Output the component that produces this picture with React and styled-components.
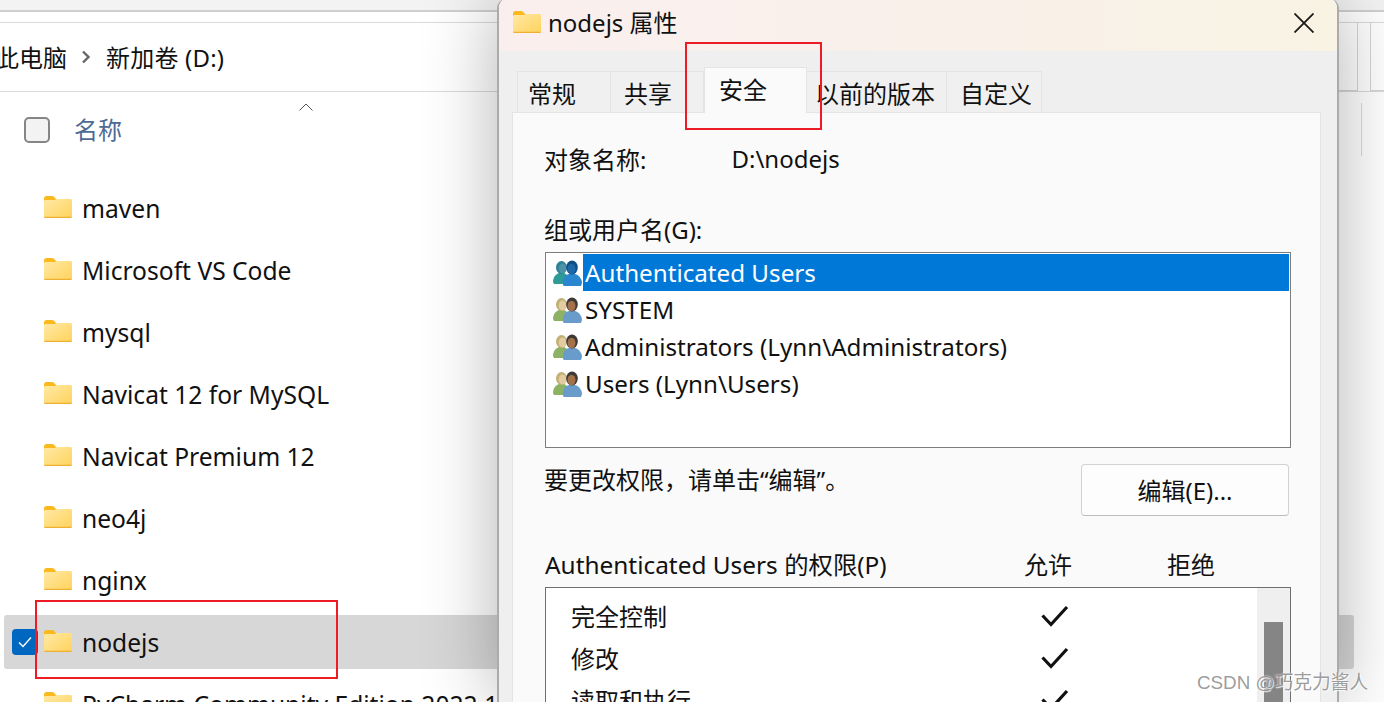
import React from 'react';
import styled, { createGlobalStyle } from 'styled-components';

const FONT = `"Noto Sans", "Noto Sans CJK SC", sans-serif`;

const GlobalStyle = createGlobalStyle`
    html, body {
        margin: 0;
        padding: 0;
        background: #fff;
    }
    * {
        box-sizing: border-box;
    }
`;

const Page = styled.div`
    position: relative;
    width: 1384px;
    height: 702px;
    overflow: hidden;
    background: #fff;
    color: #111;
    font-family: ${FONT};
`;

/* explorer behind the dialog */
const TopStrip = styled.div`
    height: 12px;
    background: #f3f3f3;
    border-bottom: 2px solid #cfcfcf;
`;

const Breadcrumb = styled.div`
    display: flex;
    align-items: center;
    height: 70px;
    margin-top: 10px;
    border-top: 1px solid #d9d9d9;
    border-bottom: 1px solid #d9d9d9;
    font-size: 24px;
    white-space: nowrap;
`;

const Crumb = styled.span`
    margin-left: ${p => p.$offset}px;
    padding-bottom: 2px;
    letter-spacing: ${p => p.$spacing || 0}px;
`;

const Chevron = styled.svg`
    width: 10px;
    height: 14px;
    margin-left: 14px;
    margin-right: 15px;
`;

const ToolBox = styled.div`
    flex: none;
    align-self: stretch;
    width: ${p => p.$width}px;
    margin-left: ${p => p.$left}px;
    margin-right: ${p => p.$right || 0}px;
    border: 1px solid #d5d5d5;
    border-top: 0;
    border-bottom: 1px solid #d5d5d5;
`;

const Spacer = styled.div`
    flex: 1;
`;

const ColumnHeader = styled.div`
    display: flex;
    height: 89px;
    padding-left: 24px;
`;

const HeaderCheck = styled.div`
    width: 26px;
    height: 26px;
    margin-top: 25px;
    background: #f3f3f3;
    border: 2px solid #858585;
    border-radius: 5px;
`;

const HeaderLabel = styled.div`
    width: 225px;
    height: 40px;
    margin-top: 18px;
    margin-left: 24px;
    font-size: 24px;
    line-height: 40px;
    color: #4d6b95;
`;

const SortCaret = styled.svg`
    width: 14px;
    height: 8px;
    margin-top: 11px;
`;

const ColumnDivider = styled.div`
    width: 1px;
    height: 53px;
    margin-top: 11px;
    margin-left: auto;
    margin-right: 22px;
    background: #dcdcdc;
`;

const FileList = styled.div`
    display: flex;
    flex-direction: column;
    gap: 8px;
    width: 1350px;
    margin-left: 4px;
`;

const FileRow = styled.div`
    display: flex;
    align-items: center;
    flex: none;
    height: 54px;
    padding-left: 8px;
    border-radius: 3px;
    background: ${p => (p.$selected ? '#d7d7d7' : 'transparent')};
    font-size: 24.6px;
    white-space: nowrap;
`;

const RowCheck = styled.div`
    display: flex;
    align-items: center;
    justify-content: center;
    width: 26px;
    height: 26px;
    margin-right: 6px;
    border-radius: 4px;
    background: ${p => (p.$on ? '#0067c0' : 'transparent')};
`;

const FileName = styled.span`
    margin-left: 10px;
`;

const FolderSvg = styled.svg`
    flex: none;
    margin-bottom: 2px;
`;

const UsersSvg = styled.svg`
    flex: none;
`;

/* properties dialog, a window lying over the explorer */
const Dialog = styled.div`
    position: absolute;
    left: 497px;
    top: -1px;
    display: flex;
    flex-direction: column;
    width: 842px;
    height: 703px;
    overflow: hidden;
    background: #efefef;
    border: 2px solid #ababab;
    border-top: 0;
    border-bottom: 0;
    border-radius: 9px 9px 0 0;
`;

const DialogShadow = styled.div`
    position: absolute;
    left: 497px;
    top: -1px;
    width: 842px;
    height: 703px;
    border-radius: 9px 9px 0 0;
    box-shadow: 0 0 75px rgba(0, 0, 0, 0.3);
`;

const TitleBar = styled.div`
    display: flex;
    align-items: center;
    flex: none;
    height: 52px;
    padding-left: 14px;
    padding-bottom: 5px;
    background: linear-gradient(90deg, #faefee 0%, #f9f0ea 50%, #f9f3e4 100%);
`;

const TitleText = styled.span`
    margin-left: 7px;
    padding-bottom: 3px;
    font-size: 24px;
`;

const CloseIcon = styled.svg`
    width: 20px;
    height: 20px;
    margin-left: auto;
    margin-right: 23px;
    margin-top: 1px;
`;

const TabStrip = styled.div`
    display: flex;
    align-items: flex-end;
    flex: none;
    height: 46px;
    margin-top: 15px;
    margin-left: 18px;
`;

const Tab = styled.div`
    position: relative;
    width: ${p => p.$width}px;
    height: ${p => (p.$active ? 46 : 41)}px;
    padding-left: ${p => p.$pad}px;
    margin-bottom: ${p => (p.$active ? -1 : 0)}px;
    background: ${p => (p.$active ? '#fafafa' : '#f0f0f0')};
    border: 1px solid #e4e4e4;
    border-bottom: 0;
    border-left-width: ${p => (p.$first || p.$active ? 1 : 0)}px;
    font-size: 24px;
    line-height: ${p => (p.$active ? 43 : 44)}px;
    white-space: nowrap;
`;

const Panel = styled.div`
    flex: 1;
    display: flex;
    flex-direction: column;
    min-height: 0;
    margin-left: 13px;
    margin-right: 16px;
    padding-left: 32px;
    padding-right: 29px;
    background: #fafafa;
    border: 1px solid #e4e4e4;
    border-bottom: 0;
`;

const TextRow = styled.div`
    display: flex;
    align-items: center;
    flex: none;
    height: 40px;
    margin-top: ${p => p.$top}px;
    margin-left: -1px;
    font-size: 24px;
    white-space: nowrap;
`;

const PathValue = styled.span`
    margin-left: 85px;
`;

const UserBox = styled.div`
    flex: none;
    height: 196px;
    margin-top: 4px;
    padding: 1px 1px 0 7px;
    background: #fff;
    border: 1px solid #7d7d7d;
`;

const UserRow = styled.div`
    display: flex;
    align-items: center;
    height: 37px;
    font-size: 24.2px;
    white-space: nowrap;
`;

const UserName = styled.div`
    flex: 1;
    height: 37px;
    padding-left: 2px;
    line-height: 38px;
    background: ${p => (p.$selected ? '#0078d7' : 'transparent')};
    color: ${p => (p.$selected ? '#fff' : '#111')};
`;

const HintRow = styled.div`
    display: flex;
    align-items: flex-start;
    justify-content: space-between;
    flex: none;
    height: 52px;
    margin-top: 16px;
    font-size: 24px;
`;

const HintText = styled.span`
    margin-left: -1px;
    line-height: 32px;
`;

const EditButton = styled.div`
    width: 208px;
    height: 52px;
    margin-right: 2px;
    background: #fdfdfd;
    border: 1px solid #d2d2d2;
    border-bottom-color: #bcbcbc;
    border-radius: 4px;
    text-align: center;
    line-height: 51px;
`;

const PermHeader = styled.div`
    display: flex;
    align-items: center;
    flex: none;
    height: 40px;
    margin-top: 27px;
    font-size: 24px;
    white-space: nowrap;
`;

const PermTitle = styled.span`
    flex: none;
    width: 479px;
    font-size: 24.4px;
`;

const PermColumn = styled.span`
    flex: none;
    width: 143px;
`;

const PermBox = styled.div`
    flex: 1;
    display: flex;
    min-height: 0;
    margin-top: 4px;
    background: #fff;
    border: 1px solid #6e6e6e;
    border-bottom: 0;
    overflow: hidden;
`;

const PermRows = styled.div`
    flex: 1;
    padding-top: 7px;
    padding-left: 25px;
`;

const PermRow = styled.div`
    display: flex;
    align-items: center;
    height: 42px;
    font-size: 24px;
    white-space: nowrap;
`;

const PermName = styled.span`
    width: 470px;
    padding-bottom: 2px;
`;

const Scrollbar = styled.div`
    flex: none;
    width: 33px;
    padding: 34px 7px 0 7px;
    background: #efefef;
`;

const ScrollThumb = styled.div`
    height: 100%;
    background: #858585;
`;

/* annotations on top of the screenshot */
const RedBox = styled.div`
    position: absolute;
    left: ${p => p.$x}px;
    top: ${p => p.$y}px;
    width: ${p => p.$w}px;
    height: ${p => p.$h}px;
    border: 2px solid #ed1c24;
`;

const Watermark = styled.div`
    position: absolute;
    left: 1197px;
    top: 669px;
    font-family: "Liberation Sans", "Noto Sans CJK SC", sans-serif;
    font-size: 18.8px;
    line-height: 28px;
    color: rgba(130, 130, 130, 0.8);
    text-shadow: 0 0 2px #fff, 1px 1px 1px rgba(255, 255, 255, 0.8);
    white-space: nowrap;
`;

const FolderIcon = ({ id }) => (
    <FolderSvg width="28" height="22" viewBox="0 0 28 22">
        <defs>
            <linearGradient id={id} x1="0" y1="0" x2="1" y2="1">
                <stop offset="0" stopColor="#ffe9a6" />
                <stop offset="1" stopColor="#ffd35c" />
            </linearGradient>
        </defs>
        <path d="M0 2.5C0 1 1 0 2.5 0H8c1 0 1.6.4 2.2 1L12 3v3H0z" fill="#fab91c" />
        <path d="M0 5.5C0 4.6.6 4 1.5 4L11 4l1.5-1h14c.9 0 1.5.6 1.5 1.5v16c0 .9-.6 1.5-1.5 1.5h-25C.6 22 0 21.4 0 20.500z" fill={`url(#${id})`} />
        <path d="M0 20.800h28V20.500c0 .9-.6 1.500-1.500 1.500h-25C.6 22 0 21.400 0 20.500z" fill="#eeb033" />
    </FolderSvg>
);

const PALETTES = {
    normal: { backHair: '#c2b074', backFace: '#e3cda0', backBody: '#8db165', hair: '#3d3a36', face: '#a3714a', body: '#6a9ccb' },
    selected: { backHair: '#2f7f96', backFace: '#4b93a8', backBody: '#2f9b96', hair: '#0f4f86', face: '#1c68a8', body: '#2a86cf' },
};

const UsersIcon = ({ variant = 'normal' }) => {
    const c = PALETTES[variant];
    return (
        <UsersSvg width="30" height="26" viewBox="0 0 30 26">
            <path d="M0 22c0-5 3-8 6-9h5c3 1 5 4 5 9l-1 2H1z" fill={c.backBody} />
            <ellipse cx="8.500" cy="7.500" rx="5.500" ry="6.500" fill={c.backHair} />
            <ellipse cx="9.500" cy="8.500" rx="3.800" ry="5" fill={c.backFace} />
            <path d="M10 25c-1-6 2-10 6-11h6c4 1 7 5 7 9l-1 3H11z" fill={c.body} />
            <ellipse cx="19" cy="7.500" rx="5.800" ry="7" fill={c.hair} />
            <ellipse cx="18.500" cy="9" rx="4" ry="5.200" fill={c.face} />
        </UsersSvg>
    );
};

const CheckMark = () => (
    <svg width="28" height="22" viewBox="0 0 28 22">
        <path d="M1.500 10.500l8.500 9L26 2" fill="none" stroke="#111" strokeWidth="3.200" />
    </svg>
);

const files = [
    'maven',
    'Microsoft VS Code',
    'mysql',
    'Navicat 12 for MySQL',
    'Navicat Premium 12',
    'neo4j',
    'nginx',
    'nodejs',
    'PyCharm Community Edition 2022.1',
];

const users = [
    { name: 'Authenticated Users', selected: true },
    { name: 'SYSTEM' },
    { name: 'Administrators (Lynn\\Administrators)' },
    { name: 'Users (Lynn\\Users)' },
];

const tabs = [
    { label: '常规', width: 94, pad: 10, first: true },
    { label: '共享', width: 93, pad: 13 },
    { label: '安全', width: 103, pad: 14, active: true },
    { label: '以前的版本', width: 140, pad: 8 },
    { label: '自定义', width: 95, pad: 13 },
];

const permissions = ['完全控制', '修改', '读取和执行'];

export default function App() {
    return (
        <Page>
            <GlobalStyle />
            <TopStrip />
            <Breadcrumb>
                <Crumb $offset={-5}>此电脑</Crumb>
                <Chevron viewBox="0 0 10 14">
                    <path d="M2 1.500l5.500 5.500L2 12.500" fill="none" stroke="#666" strokeWidth="2.400" />
                </Chevron>
                <Crumb $offset={0} $spacing={0.2}>新加卷 (D:)</Crumb>
                <Spacer />
                <ToolBox $width={20} $left={0} />
                <ToolBox $width={24} $left={12} $right={-10} />
            </Breadcrumb>
            <ColumnHeader>
                <HeaderCheck />
                <HeaderLabel>名称</HeaderLabel>
                <SortCaret viewBox="0 0 14 8">
                    <path d="M.5 7.500L7 1l6.500 6.500" fill="none" stroke="#555" strokeWidth="1" />
                </SortCaret>
                <ColumnDivider />
            </ColumnHeader>
            <FileList>
                {files.map((name, i) => (
                    <FileRow key={name} $selected={name === 'nodejs'}>
                        <RowCheck $on={name === 'nodejs'}>
                            {name === 'nodejs' && (
                                <svg width="14" height="12" viewBox="0 0 14 12">
                                    <path d="M1 6.500l4 4L13 1.500" fill="none" stroke="#fff" strokeWidth="1.400" />
                                </svg>
                            )}
                        </RowCheck>
                        <FolderIcon id={`folder-${i}`} />
                        <FileName>{name}</FileName>
                    </FileRow>
                ))}
            </FileList>

            <DialogShadow />
            <Dialog>
                <TitleBar>
                    <FolderIcon id="folder-title" />
                    <TitleText>nodejs 属性</TitleText>
                    <CloseIcon viewBox="0 0 20 20">
                        <path d="M.5.500l19 19M19.500.500l-19 19" fill="none" stroke="#1a1a1a" strokeWidth="1.800" />
                    </CloseIcon>
                </TitleBar>
                <TabStrip>
                    {tabs.map(t => (
                        <Tab key={t.label} $width={t.width} $pad={t.pad} $first={t.first} $active={t.active}>
                            {t.label}
                        </Tab>
                    ))}
                </TabStrip>
                <Panel>
                    <TextRow $top={25}>
                        对象名称:
                        <PathValue>D:\nodejs</PathValue>
                    </TextRow>
                    <TextRow $top={30}>组或用户名(G):</TextRow>
                    <UserBox>
                        {users.map(u => (
                            <UserRow key={u.name}>
                                <UsersIcon variant={u.selected ? 'selected' : 'normal'} />
                                <UserName $selected={u.selected}>{u.name}</UserName>
                            </UserRow>
                        ))}
                    </UserBox>
                    <HintRow>
                        <HintText>要更改权限，请单击“编辑”。</HintText>
                        <EditButton>编辑(E)...</EditButton>
                    </HintRow>
                    <PermHeader>
                        <PermTitle>Authenticated Users 的权限(P)</PermTitle>
                        <PermColumn>允许</PermColumn>
                        <PermColumn>拒绝</PermColumn>
                    </PermHeader>
                    <PermBox>
                        <PermRows>
                            {permissions.map(p => (
                                <PermRow key={p}>
                                    <PermName>{p}</PermName>
                                    <CheckMark />
                                </PermRow>
                            ))}
                        </PermRows>
                        <Scrollbar>
                            <ScrollThumb />
                        </Scrollbar>
                    </PermBox>
                </Panel>
            </Dialog>

            <RedBox $x={685} $y={42} $w={137} $h={88} />
            <RedBox $x={35} $y={600} $w={303} $h={79} />
            <Watermark>CSDN @巧克力酱人</Watermark>
        </Page>
    );
}
